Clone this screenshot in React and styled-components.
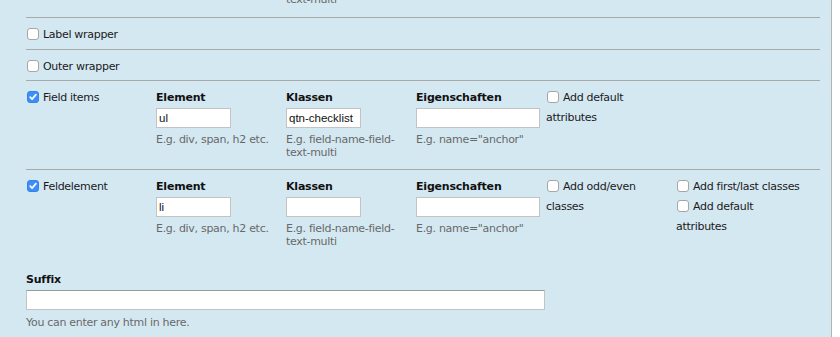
import React from 'react';
import styled, { createGlobalStyle } from 'styled-components';

const GlobalStyle = createGlobalStyle`
  html, body {
    margin: 0;
    padding: 0;
    background: #ffffff;
    overflow: hidden;
  }
  body {
    font-family: "DejaVu Sans", Verdana, sans-serif;
    font-size: 11px;
    color: #1a1a1a;
  }
`;

const Panel = styled.div`
  width: 832px;
  height: 337px;
  box-sizing: border-box;
  background: #d4e8f2;
  border-right: 1px solid #b3b3b3;
  padding: 0 11px 0 26px;
  overflow: hidden;
`;

const Row = styled.div`
  display: grid;
  grid-template-columns: 130px 130px 130px 130px 130px 1fr;
  align-items: start;
  border-top: ${p => (p.$first ? 'none' : '1px solid #a9a9a9')};
  padding: ${p => p.$pad || '7px 0 10px'};
  margin-top: ${p => p.$offset || '0'};
`;

const Col = styled.div`
  display: flex;
  flex-direction: column;
  align-items: flex-start;
`;

const Heading = styled.div`
  font-weight: bold;
  line-height: 20px;
  letter-spacing: -0.2px;
  color: #111;
`;

const TextInput = styled.input`
  box-sizing: border-box;
  width: ${p => p.$w}px;
  height: 20px;
  margin: 0;
  padding: 0 2px;
  border: 1px solid #c3c3c3;
  border-top-color: ${p => (p.$inset ? '#9a9a9a' : '#c3c3c3')};
  background: #fff;
  font-family: "Liberation Sans", Arial, sans-serif;
  font-size: 11.5px;
  color: #111;
  outline: none;
`;

const Hint = styled.div`
  margin-top: ${p => p.$mt ?? 5}px;
  line-height: 13px;
  color: #686868;
  letter-spacing: -0.3px;
  max-width: ${p => p.$max || 124}px;
`;

const CheckLabel = styled.label`
  display: block;
  line-height: 20px;
  letter-spacing: -0.3px;
  max-width: ${p => p.$max || 200}px;
  color: #1a1a1a;
`;

const Box = styled.span`
  display: inline-block;
  box-sizing: border-box;
  width: 12px;
  height: 12px;
  margin: 0 4px 0 1px;
  vertical-align: -2px;
  border-radius: 3px;
  background: ${p => (p.$checked ? '#3d8ff6' : '#ffffff')};
  border: 1px solid ${p => (p.$checked ? '#3183ee' : '#a6a6a6')};
  svg {
    display: block;
  }
`;

const Suffix = styled.div`
  margin-top: 12px;
  display: flex;
  flex-direction: column;
  align-items: flex-start;
`;

function Check({ checked, children, max }) {
  return (
    <CheckLabel $max={max}>
      <Box $checked={checked}>
        {checked && (
          <svg width="10" height="10" viewBox="0 0 10 10">
            <path d="M2.2 5.2 L4.1 7.1 L7.9 2.6" fill="none" stroke="#fff" strokeWidth="1.7" strokeLinecap="round" strokeLinejoin="round" />
          </svg>
        )}
      </Box>
      {children}
    </CheckLabel>
  );
}

function FieldColumns({ element, classes }) {
  return (
    <>
      <Col>
        <Heading>Element</Heading>
        <TextInput $w={75} defaultValue={element} />
        <Hint>E.g. div, span, h2 etc.</Hint>
      </Col>
      <Col>
        <Heading>Klassen</Heading>
        <TextInput $w={75} defaultValue={classes} />
        <Hint>E.g. field-name-field-text-multi</Hint>
      </Col>
      <Col>
        <Heading>Eigenschaften</Heading>
        <TextInput $w={124} defaultValue="" />
        <Hint>E.g. name="anchor"</Hint>
      </Col>
    </>
  );
}

export default function App() {
  return (
    <>
      <GlobalStyle />
      <Panel>
        <Row $first $pad="0 0 11px" $offset="-7px">
          <div />
          <div />
          <Col>
            <Hint $mt={0}>text-multi</Hint>
          </Col>
        </Row>

        <Row $pad="7px 0 4px">
          <Check>Label wrapper</Check>
        </Row>

        <Row $pad="7px 0 3px">
          <Check>Outer wrapper</Check>
        </Row>

        <Row>
          <Check checked>Field items</Check>
          <FieldColumns element="ul" classes="qtn-checklist" />
          <Col>
            <Check max={106}>Add default attributes</Check>
          </Col>
        </Row>

        <Row>
          <Check checked>Feldelement</Check>
          <FieldColumns element="li" classes="" />
          <Col>
            <Check max={106}>Add odd/even classes</Check>
          </Col>
          <Col>
            <Check max={130}>Add first/last classes</Check>
            <Check max={106}>Add default attributes</Check>
          </Col>
        </Row>

        <Suffix>
          <Heading>Suffix</Heading>
          <TextInput $w={519} $inset defaultValue="" />
          <Hint $mt={6} $max={400}>You can enter any html in here.</Hint>
        </Suffix>
      </Panel>
    </>
  );
}
